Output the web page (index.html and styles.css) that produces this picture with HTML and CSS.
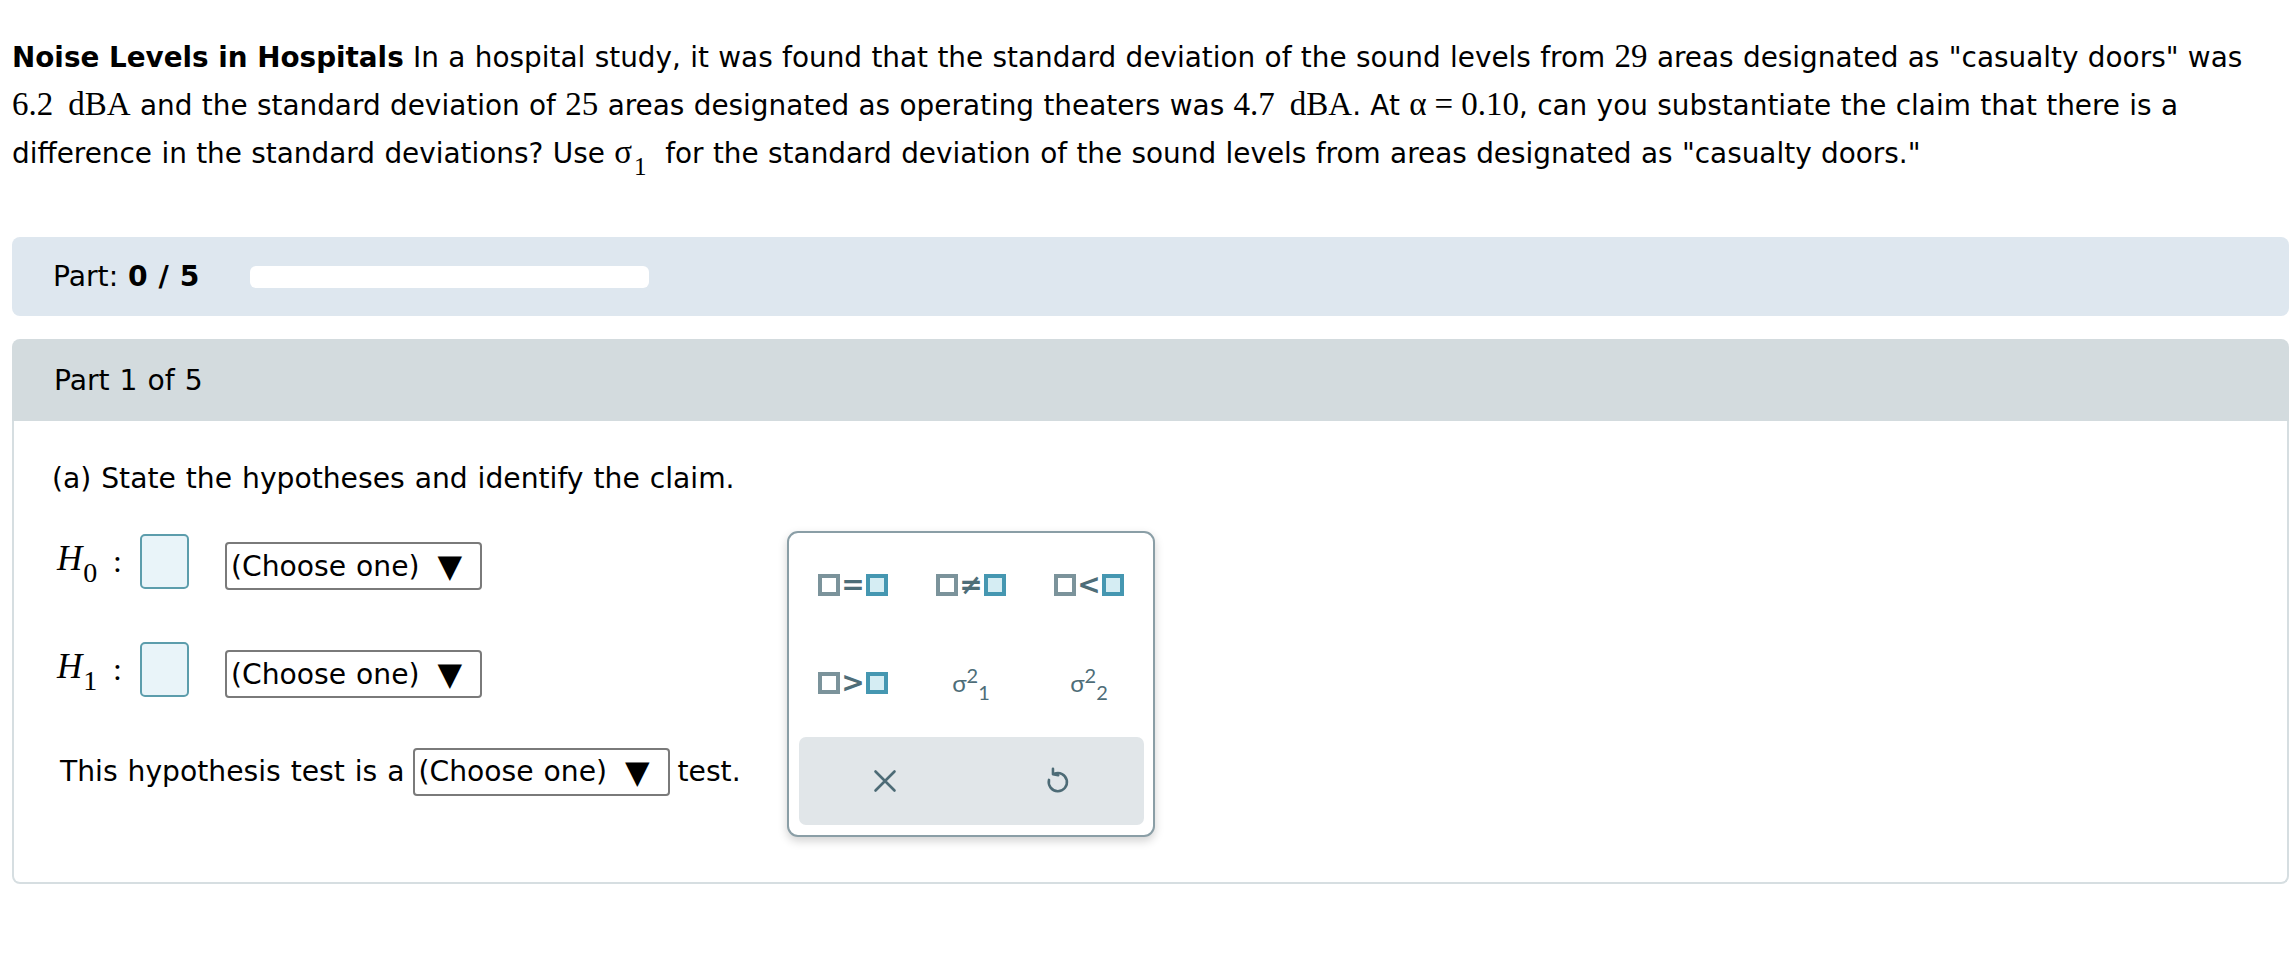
FILE: index.html
```html
<!DOCTYPE html>
<html>
<head>
<meta charset="utf-8">
<link rel="stylesheet" href="styles.css">
</head>
<body>
<div class="page">
  <p class="question"><b>Noise Levels in Hospitals</b> In a hospital study, it was found that the standard deviation of the sound levels from <span class="m">29</span> areas designated as "casualty doors" was <span class="m">6.2<span class="unit">dBA</span></span> and the standard deviation of <span class="m">25</span> areas designated as operating theaters was <span class="m">4.7<span class="unit">dBA</span></span>. At <span class="m">α<span class="eq">=</span>0.10</span>, can you substantiate the claim that there is a difference in the standard deviations? Use <span class="m">σ<sub class="msub">1</sub></span>&nbsp; for the standard deviation of the sound levels from areas designated as "casualty doors."</p>

  <div class="progress-bar">
    <span class="plabel">Part: <b>0 / 5</b></span>
    <span class="track"></span>
  </div>

  <div class="card">
    <div class="card-head">Part 1 of 5</div>
    <div class="card-body">
      <div class="prompt">(a) State the hypotheses and identify the claim.</div>

      <div class="hrow first">
        <span class="hlabel"><i>H</i><sub>0</sub></span>
        <span class="colon">:</span>
        <span class="answer-box"></span>
        <span class="select">(Choose one) <span class="arrow">▼</span></span>
      </div>

      <div class="hrow second">
        <span class="hlabel"><i>H</i><sub>1</sub></span>
        <span class="colon">:</span>
        <span class="answer-box"></span>
        <span class="select">(Choose one) <span class="arrow">▼</span></span>
      </div>

      <div class="test-row">This hypothesis test is a <span class="select">(Choose one) <span class="arrow">▼</span></span> test.</div>

      <div class="palette">
        <div class="keys">
          <div class="key"><span class="sq"></span><span class="op">=</span><span class="sq t"></span></div>
          <div class="key"><span class="sq"></span><span class="op">≠</span><span class="sq t"></span></div>
          <div class="key"><span class="sq"></span><span class="op">&lt;</span><span class="sq t"></span></div>
          <div class="key"><span class="sq"></span><span class="op">&gt;</span><span class="sq t"></span></div>
          <div class="key"><span class="sig">σ<sup>2</sup><sub>1</sub></span></div>
          <div class="key"><span class="sig">σ<sup>2</sup><sub>2</sub></span></div>
        </div>
        <div class="actions">
          <span class="act">
            <svg width="26" height="26" viewBox="0 0 26 26"><path d="M3.5 3.5 L22.5 22.5 M22.5 3.5 L3.5 22.5" stroke="#4d6b76" stroke-width="2.6" stroke-linecap="round" fill="none"/></svg>
          </span>
          <span class="act">
            <svg width="30" height="30" viewBox="0 0 28 28"><path d="M10.5 7.2 A8.5 8.5 0 1 1 5.6 13" stroke="#4d6b76" stroke-width="2.4" stroke-linecap="round" fill="none"/><path d="M9.3 2.5 L9.3 7.6 L14.2 8.6" stroke="#4d6b76" stroke-width="2.4" stroke-linecap="round" stroke-linejoin="round" fill="none"/></svg>
          </span>
        </div>
      </div>
    </div>
  </div>
</div>
</body>
</html>
```

FILE: styles.css
```css
html, body {
  margin: 0;
  padding: 0;
  background: #ffffff;
}

body {
  font-family: "DejaVu Sans", Verdana, sans-serif;
  font-size: 28.2px;
  word-spacing: 1px;
  color: #000;
}

.page {
  padding: 0 3px 0 12px;
}

.question {
  margin: 33px -3px 0 0;
  line-height: 47px;
  font-size: 27.9px;
  word-spacing: 0.5px;
}

.question b {
  font-size: 27.8px;
  word-spacing: 0;
}

.m {
  font-family: "Liberation Serif", "Times New Roman", serif;
  font-size: 33px;
  word-spacing: 0;
}

.unit {
  margin-left: 15px;
}

.eq {
  padding: 0 8px;
}

.msub {
  font-size: 25px;
  vertical-align: -12px;
  line-height: 0;
  margin-left: 2px;
}

.progress-bar {
  margin-top: 60px;
  height: 79px;
  background: #dee7ef;
  border-radius: 8px;
  display: flex;
  align-items: center;
  padding-left: 41px;
}

.plabel {
  min-width: 157px;
}

.track {
  display: inline-block;
  width: 399px;
  height: 22px;
  background: #fff;
  border-radius: 6px;
  margin-left: 40px;
}

.card {
  margin-top: 23px;
}

.card-head {
  height: 82px;
  background: #d3dbde;
  border-radius: 8px 8px 0 0;
  padding-left: 42px;
  display: flex;
  align-items: center;
  padding-top: 1px;
  box-sizing: border-box;
}

.card-body {
  position: relative;
  border: 2px solid #d6dee1;
  border-top: none;
  border-radius: 0 0 8px 8px;
  height: 463px;
  box-sizing: border-box;
  padding: 34px 0 0 38px;
}

.prompt {
  line-height: 47px;
}

.hrow {
  display: flex;
  align-items: center;
  height: 55px;
  margin-left: 5px;
}

.hrow.first {
  margin-top: 32px;
}

.hrow.second {
  margin-top: 53px;
}

.hrow .select {
  margin-top: 9px;
}

.hlabel {
  font-family: "Liberation Serif", "Times New Roman", serif;
  font-size: 35px;
  width: 56px;
  position: relative;
  top: -3px;
}

.hlabel sub {
  font-size: 28px;
  vertical-align: -12px;
  line-height: 0;
  margin-left: 1px;
}

.colon {
  font-family: "Liberation Serif", "Times New Roman", serif;
  font-size: 32px;
  width: 27px;
}

.answer-box {
  display: inline-block;
  width: 49px;
  height: 55px;
  box-sizing: border-box;
  border: 2px solid #5c9dac;
  border-radius: 5px;
  background: #e9f4f9;
  margin-right: 36px;
}

.select {
  display: inline-flex;
  align-items: center;
  width: 257px;
  height: 48px;
  box-sizing: border-box;
  border: 2px solid #7a7a7a;
  border-radius: 4px;
  padding-left: 4px;
  background: #fff;
  white-space: nowrap;
  vertical-align: middle;
}

.arrow {
  margin-left: 18px;
  font-size: 32px;
}

.test-row {
  margin-top: 50px;
  margin-left: 8px;
  display: flex;
  align-items: center;
  gap: 8px;
  height: 49px;
}

.palette {
  position: absolute;
  left: 773px;
  top: 110px;
  width: 368px;
  height: 306px;
  box-sizing: border-box;
  border: 2px solid #8a9ea6;
  border-radius: 11px;
  background: #fff;
  box-shadow: 0 4px 10px rgba(0, 0, 0, 0.18);
  padding: 0 5px;
  font-family: Lato, "Open Sans", sans-serif;
  word-spacing: 0;
  color: #4e6d78;
}

.keys {
  display: grid;
  grid-template-columns: repeat(3, 118px);
  grid-template-rows: 98px 98px;
  padding-top: 3px;
}

.key {
  display: flex;
  align-items: center;
  justify-content: center;
}

.sq {
  display: inline-block;
  width: 22px;
  height: 22px;
  box-sizing: border-box;
  border: 4px solid #7b939b;
  background: #fff;
}

.sq.t {
  border-color: #4597b1;
  background: #d5edf3;
}

.op {
  font-family: "DejaVu Sans", sans-serif;
  font-weight: bold;
  font-size: 28px;
  line-height: 22px;
  margin: 0 1px;
  color: #4e6d78;
}

.sig {
  font-size: 24px;
  line-height: 30px;
  white-space: nowrap;
}

.sig sup {
  font-size: 20px;
  vertical-align: 9px;
  line-height: 0;
}

.sig sub {
  font-size: 20px;
  vertical-align: -8px;
  line-height: 0;
}

.actions {
  margin: 5px 4px 0 5px;
  height: 88px;
  background: #e1e6e9;
  border-radius: 7px;
  display: flex;
}

.act {
  flex: 1;
  display: flex;
  align-items: center;
  justify-content: center;
}
```
